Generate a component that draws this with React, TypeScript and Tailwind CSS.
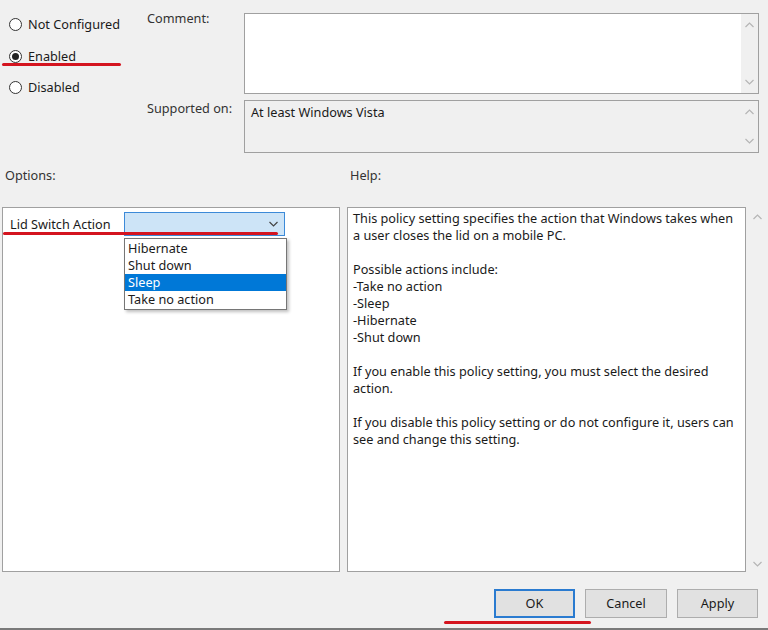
import React from "react"

const font = { fontFamily: '"Noto Sans", "Open Sans", sans-serif' }

function Up({ className = "" }: { className?: string }) {
  return (
    <svg width="9" height="6" viewBox="0 0 9 6" className={className}>
      <polyline points="0.5,5 4.5,1 8.5,5" fill="none" stroke="#b5b5b5" strokeWidth="1.2" />
    </svg>
  )
}

function Down({ className = "", color = "#b5b5b5" }: { className?: string; color?: string }) {
  return (
    <svg width="9" height="6" viewBox="0 0 9 6" className={className}>
      <polyline points="0.5,1 4.5,5 8.5,1" fill="none" stroke={color} strokeWidth="1.2" />
    </svg>
  )
}

function Radio({ label, checked }: { label: string; checked?: boolean }) {
  return (
    <div className="flex items-center gap-[6px] h-[17px]">
      <span className="w-[13px] h-[13px] rounded-full border border-[#333] bg-white flex items-center justify-center">
        {checked && <span className="w-[7px] h-[7px] rounded-full bg-[#222]" />}
      </span>
      <span>{label}</span>
    </div>
  )
}

function Scroll() {
  return (
    <div className="w-[17px] bg-[#f0f0f0] flex flex-col items-center justify-between py-[8px]">
      <Up />
      <Down />
    </div>
  )
}

export default function App() {
  return (
    <div
      className="relative w-[768px] h-[630px] overflow-hidden bg-[#f0f0f0] text-[12.7px] text-[#1a1a1a] leading-[17px]"
      style={font}
    >
      {/* top section */}
      <div className="flex h-[160px]">
        <div className="w-[147px] pl-[9px] pt-[16px] flex flex-col gap-[14.5px]">
          <Radio label="Not Configured" />
          <Radio label="Enabled" checked />
          <Radio label="Disabled" />
        </div>
        <div className="flex flex-col pt-[13px]">
          <div className="flex">
            <div className="w-[97px] -mt-[3px] text-[#333]">Comment:</div>
            <div className="w-[515px] h-[81px] border border-[#a0a0a0] bg-white flex justify-end">
              <Scroll />
            </div>
          </div>
          <div className="flex mt-[6px]">
            <div className="w-[97px] text-[#333]">Supported on:</div>
            <div className="w-[515px] h-[53px] border border-[#a0a0a0] bg-[#f0f0f0] flex justify-between">
              <div className="pl-[6px] pt-[3px]">At least Windows Vista</div>
              <Scroll />
            </div>
          </div>
        </div>
      </div>

      {/* labels */}
      <div className="flex mt-[7px] text-[#333]">
        <div className="pl-[5px] w-[350px]">Options:</div>
        <div>Help:</div>
      </div>

      {/* panels */}
      <div className="flex mt-[23px] pl-[2px] h-[365px]">
        <div className="relative w-[338px] border border-[#a0a0a0] bg-white">
          <div className="flex items-center pt-[4px] pl-[7px]">
            <div className="w-[114px]">Lid Switch Action</div>
            <div className="w-[161px] h-[24px] border border-[#3c8ad8] bg-[#cde4f7] flex items-center justify-end pr-[6px]">
              <Down color="#444" />
            </div>
          </div>
          <div className="absolute left-[121px] top-[30px] w-[163px] border border-[#767676] bg-white shadow-[2px_2px_3px_rgba(0,0,0,0.25)] py-px">
            <div className="h-[17px] pl-[3px]">Hibernate</div>
            <div className="h-[17px] pl-[3px]">Shut down</div>
            <div className="h-[17px] pl-[3px] bg-[#0078d7] text-white">Sleep</div>
            <div className="h-[17px] pl-[3px]">Take no action</div>
          </div>
        </div>
        <div className="w-[7px]" />
        <div className="w-[399px] border border-[#a0a0a0] bg-white pl-[5px] pt-[2px] pr-[4px]">
          <p>This policy setting specifies the action that Windows takes when a user closes the lid on a mobile PC.</p>
          <p className="mt-[17px]">Possible actions include:</p>
          <p>-Take no action</p>
          <p>-Sleep</p>
          <p>-Hibernate</p>
          <p>-Shut down</p>
          <p className="mt-[17px]">If you enable this policy setting, you must select the desired action.</p>
          <p className="mt-[17px]">If you disable this policy setting or do not configure it, users can see and change this setting.</p>
        </div>
        <div className="w-[20px] flex flex-col items-center justify-between pt-[7px] pb-[5px] pl-[2px]">
          <Up />
          <Down />
        </div>
      </div>

      {/* buttons */}
      <div className="flex justify-end gap-[10px] pr-[10px] mt-[17px]">
        <button className="w-[81px] h-[29px] border-2 border-[#2a7bd0] bg-[#e1e1e1]" style={font}>OK</button>
        <button className="w-[82px] h-[29px] border border-[#adadad] bg-[#e1e1e1]" style={font}>Cancel</button>
        <button className="w-[81px] h-[29px] border border-[#adadad] bg-[#e1e1e1]" style={font}>Apply</button>
      </div>

      {/* red annotation underlines */}
      <div className="absolute left-[2px] top-[63px] w-[119px] h-[3px] rounded-full bg-[#d4141f]" />
      <div className="absolute left-[3px] top-[232px] w-[275px] h-[3px] rounded-full bg-[#d4141f]" />
      <div className="absolute left-[444px] top-[621px] w-[147px] h-[3px] rounded-full bg-[#d4141f]" />

      <div className="absolute left-0 bottom-0 w-full h-[2px] bg-[#7a7a7a]" />
    </div>
  )
}
